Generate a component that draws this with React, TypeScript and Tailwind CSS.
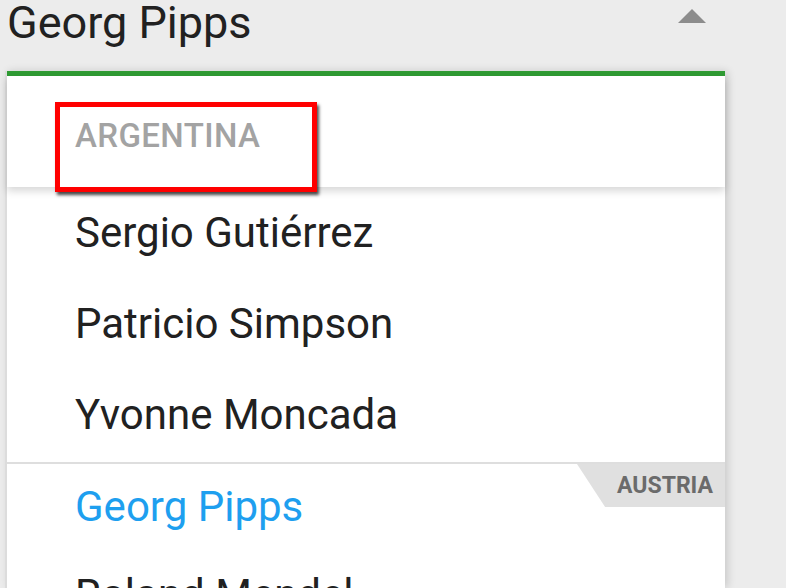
const argentina = ["Sergio Gutiérrez", "Patricio Simpson", "Yvonne Moncada"];

function Caret() {
  return (
    <svg width="28" height="15" viewBox="0 0 28 15" className="mt-[9px] mr-[80px]">
      <path d="M14 0 L28 14 L0 14 Z" fill="#8c8c8c" />
    </svg>
  );
}

export default function App() {
  return (
    <div className="relative w-[786px] h-[588px] overflow-hidden bg-[#ececec] font-['Roboto',sans-serif] text-[#212121]">
      <div className="flex h-[71px] items-start justify-between pl-[7px]">
        <span className="text-[45px] leading-none">Georg Pipps</span>
        <Caret />
      </div>

      <div className="ml-[5px] w-[720px] h-[517px] border-l-2 border-[#dcdcdc] bg-white shadow-[3px_0_8px_rgba(0,0,0,0.14)]">
        <div className="h-[5px] bg-[#2f9b33]" />

        <div className="relative z-10 h-[111px] bg-white pl-[68px] pt-[43px] shadow-[0_4px_8px_rgba(0,0,0,0.16)]">
          <span className="text-[33px] leading-none font-medium tracking-[0.4px] text-[#a3a3a3]">ARGENTINA</span>
        </div>

        <div className="pb-[2px]">
          {argentina.map((name) => (
            <div key={name} className="h-[91px] pl-[68px] text-[42px] leading-[91px]">
              {name}
            </div>
          ))}
        </div>

        <div className="relative border-t-2 border-[#dedede]">
          <div className="absolute right-0 top-0 flex h-[43px] w-[148px] items-center justify-end bg-[#e0e0e0] pr-[12px] [clip-path:polygon(0_0,100%_0,100%_100%,19%_100%)]">
            <span className="text-[23px] leading-none font-bold text-[#6b6b6b]">AUSTRIA</span>
          </div>
          <div className="h-[91px] pl-[68px] text-[42px] leading-[86px] text-[#1e9fef]">Georg Pipps</div>
          <div className="h-[91px] pl-[68px] text-[42px] leading-[80px]">Roland Mendel</div>
        </div>
      </div>

      <div className="absolute left-[55px] top-[102px] h-[90px] w-[262px] border-[5px] border-[#ff0000] shadow-[2px_3px_3px_rgba(0,0,0,0.7)] z-20" />
    </div>
  );
}
